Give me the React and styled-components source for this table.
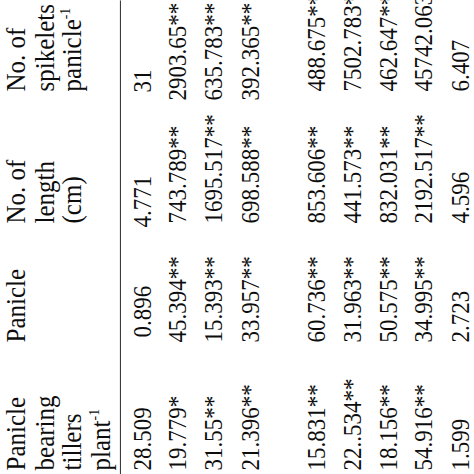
import styled, { createGlobalStyle } from "styled-components";

const GlobalStyle = createGlobalStyle`
  html, body {
    margin: 0;
    padding: 0;
    background: #ffffff;
  }
`;

// the scan is a table turned on its side and stretched a little across the glyphs
const STRETCH = 1.1;

const Page = styled.div`
  width: 474px;
  height: 474px;
  overflow: hidden;
  display: flex;
  align-items: center;
  justify-content: center;
  background: #ffffff;
`;

const Table = styled.div`
  flex: none;
  width: 474px;
  height: ${474 / STRETCH}px;
  transform: rotate(-90deg) scale(1, ${STRETCH});
  font-family: "Liberation Serif", "Times New Roman", serif;
  color: #0d0d0d;
  white-space: nowrap;
`;

const Grid = styled.div`
  display: grid;
  grid-template-columns: 128px 119px 132px 240px;
  padding-left: 4px;
`;

const HeadRow = styled(Grid)`
  box-sizing: border-box;
  height: 110px;
  padding-top: 2px;
  border-bottom: 1px solid #3c3c3c;
  font-size: 25px;
  line-height: 25.5px;
`;

const HeadCell = styled.div`
  display: flex;
  flex-direction: column;
`;

const Sup = styled.sup`
  font-size: 0.55em;
  line-height: 0;
  vertical-align: 0.75em;
`;

const Body = styled.div`
  padding-top: 3.5px;
`;

const Row = styled(Grid)`
  height: 32.7px;
  font-size: 23px;
  line-height: 32.7px;
  margin-top: ${(p) => (p.$spaced ? "28px" : "0")};
`;

const Cell = styled.div`
  padding-left: ${(p) => (p.$nudge > 0 ? p.$nudge : 0)}px;
  margin-left: ${(p) => (p.$nudge < 0 ? p.$nudge : 0)}px;
`;

const headers = [
  ["Panicle", "bearing", "tillers", ["plant", "-1"]],
  ["Panicle"],
  ["No. of", "length", "(cm)"],
  ["No. of", "spikelets", ["panicle", "-1"]],
];

// [value, nudge] where the scan sits a few pixels off its column
const rows = [
  [["28.509"], ["0.896", 5], ["4.771", -4], ["31", -1]],
  [["19.779*"], ["45.394**"], ["743.789**"], ["2903.65**", -9]],
  [["31.55**"], ["15.393**"], ["1695.517**"], ["635.783**", -9]],
  [["21.396**"], ["33.957**"], ["698.588**"], ["392.365**", -9]],
  [["15.831**"], ["60.736**"], ["853.606**"], ["488.675**"]],
  [["22..534**"], ["31.963**"], ["441.573**"], ["7502.783**"]],
  [["18.156**"], ["50.575**"], ["832.031**"], ["462.647**"]],
  [["54.916**"], ["34.995**"], ["2192.517**"], ["45742.063**"]],
  [["1.599"], ["2.723"], ["4.596"], ["6.407"]],
];

const HeadLine = ({ line }) =>
  Array.isArray(line) ? (
    <span>
      {line[0]}
      <Sup>{line[1]}</Sup>
    </span>
  ) : (
    <span>{line}</span>
  );

const App = () => {
  return (
    <>
      <GlobalStyle />
      <Page>
        <Table>
          <HeadRow>
            {headers.map((lines, i) => (
              <HeadCell key={i}>
                {lines.map((line, j) => (
                  <HeadLine key={j} line={line} />
                ))}
              </HeadCell>
            ))}
          </HeadRow>
          <Body>
            {rows.map((cells, i) => (
              <Row key={i} $spaced={i === 4}>
                {cells.map(([value, nudge], j) => (
                  <Cell key={j} $nudge={nudge}>
                    {value}
                  </Cell>
                ))}
              </Row>
            ))}
          </Body>
        </Table>
      </Page>
    </>
  );
};

export default App;
